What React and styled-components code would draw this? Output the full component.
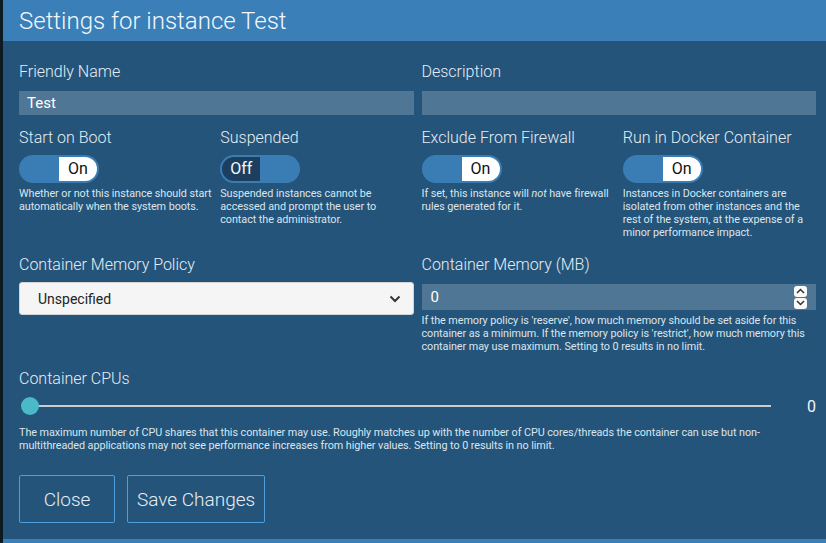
import styled, { createGlobalStyle } from 'styled-components'

const Global = createGlobalStyle`
	html, body {
		margin: 0;
		padding: 0;
		background: #0d1a21;
		font-family: Roboto, "Liberation Sans", sans-serif;
		overflow: hidden;
	}
`

const Modal = styled.div`
	margin-left: 3px;
	width: 823px;
	height: 543px;
	display: flex;
	flex-direction: column;
	background: #245479;
	border-bottom: 4px solid #3a7fb7;
	box-sizing: border-box;
	color: #e4edf4;
`

const Header = styled.div`
	height: 41px;
	flex-shrink: 0;
	display: flex;
	align-items: center;
	padding-left: 16px;
	background: #3a7fb7;
	color: #f2f7fb;
	font-size: 24px;
	font-weight: 300;
`

const Body = styled.div`
	flex: 1;
	padding: 21px 10px 0 16px;
	display: flex;
	flex-direction: column;
`

const Grid = styled.div`
	display: grid;
	grid-template-columns: ${(p) => p.$cols || '1fr 1fr'};
	column-gap: 8px;
	margin-top: ${(p) => p.$top || 0}px;
`

const Field = styled.div`
	display: flex;
	flex-direction: column;
	margin-top: ${(p) => p.$top || 0}px;
`

const Label = styled.div`
	font-size: 16px;
	font-weight: 300;
	line-height: 19px;
	color: #e6eef5;
	margin-bottom: ${(p) => p.$gap || 8}px;
`

const TextInput = styled.div`
	height: 24px;
	background: #4f7694;
	color: #fff;
	font-size: 15px;
	font-weight: 400;
	line-height: 24px;
	padding-left: 8px;
`

const Help = styled.div`
	font-size: 10.8px;
	letter-spacing: -0.06px;
	line-height: 13px;
	color: #dbe5ee;
	margin-top: ${(p) => p.$top || 4}px;
	max-width: ${(p) => (p.$max ? `${p.$max}px` : 'none')};

	em {
		font-style: italic;
	}
`

const Track = styled.div`
	width: 80px;
	height: 28px;
	box-sizing: border-box;
	border-radius: 14px;
	background: #3a7db5;
	padding: 2px;
	display: flex;
	justify-content: ${(p) => (p.$on ? 'flex-end' : 'flex-start')};
`

const Knob = styled.div`
	width: 38px;
	height: 24px;
	background: ${(p) => (p.$on ? '#ffffff' : '#1d3f5f')};
	color: ${(p) => (p.$on ? '#111' : '#f4f8fb')};
	border-radius: ${(p) => (p.$on ? '0 12px 12px 0' : '12px 0 0 12px')};
	font-size: 16px;
	line-height: 24px;
	text-align: center;
`

const Toggle = ({ on }) => (
	<Track $on={on}>
		<Knob $on={on}>{on ? 'On' : 'Off'}</Knob>
	</Track>
)

const Select = styled.div`
	height: 33px;
	box-sizing: border-box;
	background: #f5f5f5;
	border: 1px solid #d4d4d4;
	border-radius: 3px;
	display: flex;
	align-items: center;
	justify-content: space-between;
	padding: 0 12px 0 18px;
	color: #222;
	font-size: 14px;
	font-weight: 400;
`

const NumberInput = styled.div`
	height: 26px;
	margin-top: 2px;
	background: #4f7694;
	display: flex;
	align-items: center;
	justify-content: space-between;
	padding: 0 9px;
	color: #fff;
	font-size: 15px;
`

const Spinner = styled.div`
	display: flex;
	flex-direction: column;
	gap: 1px;
`

const SpinBtn = styled.div`
	width: 13px;
	height: 11px;
	background: #fafafa;
	border-radius: 3px;
	display: flex;
	align-items: center;
	justify-content: center;
`

const SliderRow = styled.div`
	display: flex;
	align-items: center;
	height: 20px;
`

const Slider = styled.div`
	flex: 1;
	position: relative;
	height: 20px;
	display: flex;
	align-items: center;
	padding-left: 5px;

	&::before {
		content: '';
		flex: 1;
		height: 2px;
		background: #c9ccd0;
	}
`

const Thumb = styled.div`
	position: absolute;
	left: 2px;
	top: 1px;
	width: 18px;
	height: 18px;
	border-radius: 50%;
	background: #4bbac8;
`

const SliderValue = styled.div`
	width: 45px;
	text-align: right;
	font-size: 16px;
	color: #f0f5f9;
`

const Buttons = styled.div`
	display: flex;
	gap: 12px;
	margin-top: 23px;
`

const Button = styled.button`
	height: 48px;
	min-width: 96px;
	padding: 0 9px;
	background: transparent;
	border: 1px solid #4e9fdc;
	border-radius: 2px;
	color: #e6eef5;
	font-family: Roboto, "Liberation Sans", sans-serif;
	font-size: 19px;
	font-weight: 300;
`

const Chevron = ({ up }) => (
	<svg width="9" height="6" viewBox="0 0 9 6">
		<path
			d={up ? 'M1 5 L4.5 1.5 L8 5' : 'M1 1 L4.5 4.5 L8 1'}
			fill="none"
			stroke="#333"
			strokeWidth="1.5"
		/>
	</svg>
)

export default function App() {
	return (
		<>
			<Global />
			<Modal>
				<Header>Settings for instance Test</Header>
				<Body>
					<Grid>
						<Field>
							<Label $gap={10}>Friendly Name</Label>
							<TextInput>Test</TextInput>
						</Field>
						<Field>
							<Label $gap={10}>Description</Label>
							<TextInput />
						</Field>
					</Grid>

					<Grid $cols="repeat(4, 1fr)" $top={13}>
						<Field>
							<Label>Start on Boot</Label>
							<Toggle on />
							<Help>Whether or not this instance should start automatically when the system boots.</Help>
						</Field>
						<Field>
							<Label>Suspended</Label>
							<Toggle on={false} />
							<Help $max={185}>
								Suspended instances cannot be accessed and prompt the user to contact the administrator.
							</Help>
						</Field>
						<Field>
							<Label>Exclude From Firewall</Label>
							<Toggle on />
							<Help>
								If set, this instance will <em>not</em> have firewall rules generated for it.
							</Help>
						</Field>
						<Field>
							<Label>Run in Docker Container</Label>
							<Toggle on />
							<Help>
								Instances in Docker containers are isolated from other instances and the rest of the
								system, at the expense of a minor performance impact.
							</Help>
						</Field>
					</Grid>

					<Grid $top={16}>
						<Field>
							<Label>Container Memory Policy</Label>
							<Select>
								<span>Unspecified</span>
								<svg width="12" height="8" viewBox="0 0 12 8">
									<path d="M1.5 1.5 L6 6 L10.5 1.5" fill="none" stroke="#333" strokeWidth="2" />
								</svg>
							</Select>
						</Field>
						<Field>
							<Label>Container Memory (MB)</Label>
							<NumberInput>
								<span>0</span>
								<Spinner>
									<SpinBtn>
										<Chevron up />
									</SpinBtn>
									<SpinBtn>
										<Chevron />
									</SpinBtn>
								</Spinner>
							</NumberInput>
							<Help>
								If the memory policy is 'reserve', how much memory should be set aside for this
								container as a minimum. If the memory policy is 'restrict', how much memory this
								container may use maximum. Setting to 0 results in no limit.
							</Help>
						</Field>
					</Grid>

					<Field $top={16}>
						<Label>Container CPUs</Label>
						<SliderRow>
							<Slider>
								<Thumb />
							</Slider>
							<SliderValue>0</SliderValue>
						</SliderRow>
						<Help $top={10}>
							The maximum number of CPU shares that this container may use. Roughly matches up with the
							number of CPU cores/threads the container can use but non-multithreaded applications may
							not see performance increases from higher values. Setting to 0 results in no limit.
						</Help>
					</Field>

					<Buttons>
						<Button>Close</Button>
						<Button>Save Changes</Button>
					</Buttons>
				</Body>
			</Modal>
		</>
	)
}
